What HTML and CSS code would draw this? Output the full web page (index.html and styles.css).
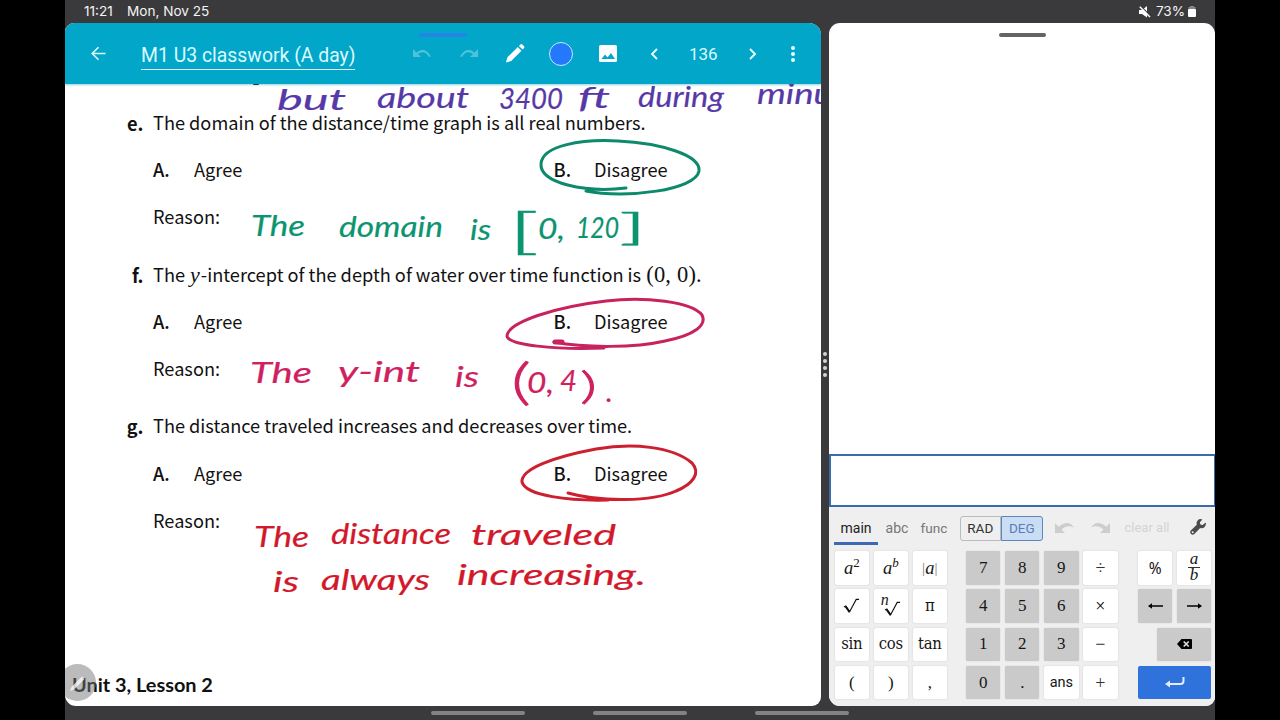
FILE: index.html
```
<!DOCTYPE html>
<html lang="en">
<head>
<meta charset="utf-8">
<title>M1 U3 classwork (A day)</title>
<link rel="stylesheet" href="styles.css">
</head>
<body>
<div class="device">
  <header class="status">
    <span class="clock">11:21</span><span class="date">Mon, Nov 25</span>
    <span class="status-right">
      <svg class="mute" viewBox="0 0 12 12"><path d="M0 4h3l5-4v11.500L3 8H0z" fill="#fff"/><path d="M2 .5 12 10.500" stroke="#3a3a3c" stroke-width="1.300"/><path d="M.8 .8 11 11" stroke="#fff" stroke-width="1.500"/></svg>
      <span class="battery-text">73%</span>
      <svg class="battery" viewBox="0 0 8 11"><path d="M2 0h4v1h1.500v3H.5V1H2z" fill="#858587"/><rect y="3" width="8" height="8" rx="1" fill="#fff"/></svg>
    </span>
  </header>

  <div class="panes">
    <section class="notes">
      <div class="toolbar">
        <svg class="back" viewBox="0 0 16 16"><path d="M15.500 8H1.500M8 1.300 1.300 8 8 14.700" fill="none" stroke="#dffaff" stroke-width="1.700"/></svg>
        <span class="title">M1 U3 classwork (A day)</span>
        <svg class="undo" viewBox="0 0 20 10"><path d="M0 0v9h9L5.500 5.600Q13 .5 17.800 9l2-.7Q13.500-4 3.700 3.800z" fill="#4fc2da"/></svg>
        <svg class="redo" viewBox="0 0 20 10"><path d="M20 0v9h-9l3.500-3.400Q7 .5 2.200 9l-2-.7Q6.500-4 16.300 3.800z" fill="#4fc2da"/></svg>
        <svg class="pencil" viewBox="0 0 20 20"><path d="M.5 19.500 2 14 13 3.200l3.800 3.800L6 18zM14.200 2l1.500-1.500q1-.8 2 0l1.800 1.800q.8 1 0 2L18 5.800z" fill="#fff"/></svg>
        <span class="swatch"></span>
        <svg class="image" viewBox="0 0 18 17"><rect width="18" height="17" rx="1.500" fill="#fff"/><path d="M2.500 14 6 9.500l2.500 3L12 8l4 6z" fill="#02a6c9"/></svg>
        <svg class="prev" viewBox="0 0 8 12"><path d="M7 1 2 6l5 5" fill="none" stroke="#e8fcff" stroke-width="1.900"/></svg>
        <span class="page-no">136</span>
        <svg class="next" viewBox="0 0 8 12"><path d="M1 1l5 5-5 5" fill="none" stroke="#e8fcff" stroke-width="1.900"/></svg>
        <span class="more"><i></i><i></i><i></i></span>
        <span class="tab-mark"></span>
      </div>

      <div class="paper">
        <div class="question">
          <div class="row"><b class="letter">e.</b><span class="stem">The domain of the distance/time graph is all real numbers.</span></div>
          <div class="row options"><b>A.</b><span>Agree</span><b>B.</b><span>Disagree</span></div>
          <div class="row reason">Reason:</div>
        </div>
        <div class="question">
          <div class="row"><b class="letter">f.</b><span class="stem">The <em>y</em>-intercept of the depth of water over time function is <span class="math">(0, 0).</span></span></div>
          <div class="row options"><b>A.</b><span>Agree</span><b>B.</b><span>Disagree</span></div>
          <div class="row reason">Reason:</div>
        </div>
        <div class="question">
          <div class="row"><b class="letter">g.</b><span class="stem">The distance traveled increases and decreases over time.</span></div>
          <div class="row options"><b>A.</b><span>Agree</span><b>B.</b><span>Disagree</span></div>
          <div class="row reason">Reason:</div>
        </div>
        <div class="footer">Unit 3, Lesson 2</div>

        <svg class="ink" viewBox="65 84 756 622">
          <g class="purple">
            <path d="M254 84h4"/>
            <text x="277" y="110" textLength="69" lengthAdjust="spacingAndGlyphs">but</text>
            <text x="377" y="108" textLength="92" lengthAdjust="spacingAndGlyphs">about</text>
            <text x="499" y="109" textLength="64" lengthAdjust="spacingAndGlyphs">3400</text>
            <text x="578" y="108" textLength="32" lengthAdjust="spacingAndGlyphs">ft</text>
            <text x="638" y="107" textLength="86" lengthAdjust="spacingAndGlyphs">during</text>
            <text x="757" y="104" textLength="76" lengthAdjust="spacingAndGlyphs">minu</text>
          </g>
          <g class="green">
            <path d="M626 188C585 193 540 183 541 164C542 145 583 139 618 141C660 143 701 155 699 171C696 190 626 199 586 191"/>
            <text x="251" y="236" textLength="54" lengthAdjust="spacingAndGlyphs">The</text>
            <text x="339" y="237" textLength="104" lengthAdjust="spacingAndGlyphs">domain</text>
            <text x="470" y="240" textLength="21" lengthAdjust="spacingAndGlyphs">is</text>
            <text class="tall" x="508" y="248" textLength="31" lengthAdjust="spacingAndGlyphs">[</text>
            <text x="538" y="239" textLength="27" lengthAdjust="spacingAndGlyphs">0,</text>
            <text x="576" y="238" textLength="43" lengthAdjust="spacingAndGlyphs">120</text>
            <text class="mid" x="619" y="240" textLength="28" lengthAdjust="spacingAndGlyphs">]</text>
          </g>
          <g class="pink">
            <path d="M554 342C585 348 635 348 665 341C695 335 707 325 702 315C692 302 645 296 606 301C555 307 508 322 507 336C508 345 555 350 604 348"/>
            <path class="thick" d="M555 342h7"/>
            <text x="250" y="383" textLength="62" lengthAdjust="spacingAndGlyphs">The</text>
            <text x="338" y="382" textLength="82" lengthAdjust="spacingAndGlyphs">y-int</text>
            <text x="455" y="387" textLength="24" lengthAdjust="spacingAndGlyphs">is</text>
            <text class="tall" x="511" y="399" textLength="20" lengthAdjust="spacingAndGlyphs">(</text>
            <text x="527" y="393" textLength="27" lengthAdjust="spacingAndGlyphs">0,</text>
            <text x="560" y="391" textLength="17" lengthAdjust="spacingAndGlyphs">4</text>
            <text class="mid" x="580" y="399" textLength="17" lengthAdjust="spacingAndGlyphs">)</text>
            <text x="606" y="402">.</text>
          </g>
          <g class="red">
            <path d="M568 493C600 502 652 502 676 491C693 484 701 473 692 463C672 446 632 443 596 449C553 457 521 469 522 482C526 496 570 501 608 500"/>
            <text x="254" y="547" textLength="55" lengthAdjust="spacingAndGlyphs">The</text>
            <text x="331" y="544" textLength="120" lengthAdjust="spacingAndGlyphs">distance</text>
            <text x="471" y="545" textLength="145" lengthAdjust="spacingAndGlyphs">traveled</text>
            <text x="273" y="592" textLength="26" lengthAdjust="spacingAndGlyphs">is</text>
            <text x="321" y="590" textLength="109" lengthAdjust="spacingAndGlyphs">always</text>
            <text x="457" y="585" textLength="189" lengthAdjust="spacingAndGlyphs">increasing.</text>
          </g>
        </svg>
        <span class="bubble"><svg viewBox="0 0 18 18"><path d="M1 17l1.500-4L13 2.500 15.500 5 5 15.500z" fill="#fff" opacity=".75"/></svg></span>
      </div>
    </section>

    <div class="divider"><i></i><i></i><i></i><i></i></div>

    <section class="calc">
      <div class="history"><span class="handle"></span></div>
      <div class="entry"></div>
      <div class="keypad">
        <div class="tabs">
          <span class="tab active">main</span><span class="tab">abc</span><span class="tab func">func</span>
          <span class="angle"><span>RAD</span><span class="on">DEG</span></span>
          <svg class="c-undo" viewBox="0 0 20 11"><path d="M0 1v10h10L6.500 7.500Q12 2 19 5.500 13-3 3.700 4.700z" fill="#cdcdcd"/></svg>
          <svg class="c-redo" viewBox="0 0 20 11"><path d="M20 1v10H10l3.500-3.500Q8 2 1 5.500 7-3 16.300 4.700z" fill="#cdcdcd"/></svg>
          <span class="clear">clear all</span>
          <svg class="wrench" viewBox="0 0 16 16"><path d="M15.600 3.600 12.700 6 10.300 5.500 9.900 3.200 12.400.5Q9.500-.6 7.600 1.500 6 3.300 6.800 5.700L.8 11.500Q-.5 13.300 1 15q1.800 1.500 3.400 0L10.200 9q2.500.8 4.400-1Q16.500 6 15.600 3.600zM2.700 12.200a1 1 0 1 1 0 2 1 1 0 0 1 0-2z" fill="#4c4c4f"/></svg>
        </div>
        <div class="keys">
          <div class="group fn">
            <span class="key it"><i>a</i><sup>2</sup></span><span class="key it"><i>a</i><sup><i>b</i></sup></span><span class="key it abs"><u>|</u><i>a</i><u>|</u></span>
            <span class="key"><svg class="root" viewBox="0 0 18 16"><path d="M1 9l2-1 4 6L14 1h3" fill="none" stroke="#111" stroke-width="1.200"/><path d="M2.700 8.500 7 14.500" stroke="#111" stroke-width="2"/></svg></span>
            <span class="key nroot"><i>n</i><svg class="root" viewBox="0 0 18 16"><path d="M1 9l2-1 4 6L14 1h3" fill="none" stroke="#111" stroke-width="1.200"/><path d="M2.700 8.500 7 14.500" stroke="#111" stroke-width="2"/></svg></span>
            <span class="key word">π</span>
            <span class="key word">sin</span><span class="key word">cos</span><span class="key word">tan</span>
            <span class="key">(</span><span class="key">)</span><span class="key">,</span>
          </div>
          <div class="group num">
            <span class="key gray">7</span><span class="key gray">8</span><span class="key gray">9</span><span class="key op">÷</span>
            <span class="key gray">4</span><span class="key gray">5</span><span class="key gray">6</span><span class="key op times">×</span>
            <span class="key gray">1</span><span class="key gray">2</span><span class="key gray">3</span><span class="key op">−</span>
            <span class="key gray">0</span><span class="key gray">.</span><span class="key ans">ans</span><span class="key op">+</span>
          </div>
          <div class="group edit">
            <span class="key pct">%</span><span class="key"><span class="frac"><i>a</i><i>b</i></span></span>
            <span class="key gray"><svg class="arrow" viewBox="0 0 15 6"><path d="M1 3h14" stroke="#000" stroke-width="1.300"/><path d="M0 3 4 .3v5.400z"/></svg></span>
            <span class="key gray"><svg class="arrow" viewBox="0 0 15 6"><path d="M0 3h14" stroke="#000" stroke-width="1.300"/><path d="M15 3 11 .3v5.400z"/></svg></span>
            <span class="key gray del"><svg viewBox="0 0 15 10"><path d="M0 5 4.500 0H14q1 0 1 1v8q0 1-1 1H4.500z"/><path d="M6.700 2.500l5 5m0-5-5 5" stroke="#ddd" stroke-width="1.700"/></svg></span>
            <span class="key enter"><svg viewBox="0 0 20 11"><path d="M18.500 0v4q0 3-3 3H3" fill="none" stroke="#e4edff" stroke-width="2"/><path d="M0 7l5-3.500v7z" fill="#e4edff"/></svg></span>
          </div>
        </div>
      </div>
    </section>
  </div>

  <nav class="gestures"><i></i><i></i><i></i></nav>
</div>
</body>
</html>
```
FILE: styles.css
```
* { box-sizing: border-box; }
body { margin: 0; background: #000; height: 720px; overflow: hidden; }
svg { display: block; flex: none; }

.device { width: 1150px; height: 720px; margin-left: 65px; background: #3a3a3c; display: flex; flex-direction: column; }

.status { height: 23px; flex: none; display: flex; align-items: center; padding: 0 19px 0 19px; color: #f4f4f4; font: 13.600px/23px Inter, sans-serif; }
.clock { width: 43px; }
.status-right { margin-left: auto; display: flex; align-items: center; font-size: 13.6px; }
.mute { width: 12px; height: 12px; margin-right: 5px; }
.battery-text { width: 31px; letter-spacing: -.1px; }
.battery { width: 8px; height: 11px; margin-left: 1px; }

.panes { height: 683px; flex: none; display: flex; }

.notes { width: 756px; border-radius: 9px 12px 9px 11px; overflow: hidden; background: #fff; display: flex; flex-direction: column; }
.toolbar { position: relative; height: 61px; flex: none; background: #02a6c9; display: flex; align-items: center; padding-left: 26px; color: #d9faff; font-family: Roboto, sans-serif; box-shadow: 0 1px 2px #8fd3e0; }
.back { width: 15px; height: 15px; }
.title { width: 214px; margin: 2px 0 0 35px; height: 30px; font-size: 19.400px; line-height: 31px; white-space: nowrap; border-bottom: 1px solid #e8fbff; }
.undo { width: 20px; height: 9px; margin-left: 57px; }
.redo { width: 20px; height: 9px; margin-left: 27px; }
.pencil { width: 20px; height: 19px; margin-left: 26px; }
.swatch { width: 24px; height: 24px; margin-left: 24px; border-radius: 50%; background: #2478fb; border: 1.5px solid #c4eef9; }
.image { width: 18px; height: 17px; margin-left: 26px; }
.prev { width: 8px; height: 12px; margin-left: 33px; }
.page-no { width: 30px; margin: 1px 0 0 31px; font-size: 17px; }
.next { width: 8px; height: 12px; margin-left: 30px; }
.more { display: flex; flex-direction: column; gap: 2px; margin-left: 34px; }
.more i { width: 4px; height: 4px; border-radius: 50%; background: #e8fcff; }
.tab-mark { position: absolute; left: 354px; top: 10px; width: 48px; height: 4px; border-radius: 2px; background: #2385e6; }

.paper { position: relative; flex: 1; padding-top: 15px; color: #111; font: 18.200px/47.2px "Noto Sans CJK SC", "Noto Sans", sans-serif; display: flex; flex-direction: column; }
.question { height: 151.7px; flex: none; }
.row { height: 47.2px; display: flex; white-space: nowrap; }
.row > * { flex: none; }
.letter { width: 78.5px; padding-top: 1px; text-align: right; }
.stem { margin-left: 9.5px; }
.stem em, .math { font-family: "Liberation Serif", serif; font-size: 22px; line-height: 20px; }
.stem em { margin: 0 1px; }
.math { font-size: 22.5px; margin-left: 1px; letter-spacing: .2px; }
.options { padding-left: 88px; }
.options b { width: 41px; font-weight: 500; }
.options span { width: 359.5px; }
.options span + b { width: 40.5px; }
.reason { padding-left: 88px; }
.footer { margin: auto 0 0 7px; height: 45px; font: 700 19.900px/46px Lato, sans-serif; }

.ink { position: absolute; left: 0; top: 0; width: 756px; height: 622px; overflow: hidden; }
.ink path { fill: none; stroke-width: 3; stroke-linecap: round; }
.ink .thick { stroke-width: 5; }
.ink text { font: italic 400 29px Lato, sans-serif; stroke-width: .2; }
.ink .tall { font-size: 50px; font-style: normal; font-weight: 300; stroke-width: .7; }
.ink .mid { font-size: 37px; font-style: normal; font-weight: 300; stroke-width: .7; }
.purple text { fill: #5638a6; stroke: #5638a6; }
.purple path { stroke: #333; stroke-width: 2; }
.green text { fill: #0c9470; stroke: #0c9470; }
.green path { stroke: #0c8a6b; }
.pink text { fill: #cf2160; stroke: #cf2160; }
.pink path { stroke: #c7235f; }
.red text { fill: #d2182b; stroke: #d2182b; }
.red path { stroke: #cc1f30; }

.bubble { position: absolute; left: -6px; top: 580px; width: 37px; height: 37px; border-radius: 50%; background: rgba(120, 120, 120, .5); display: flex; align-items: center; justify-content: center; }
.bubble svg { width: 18px; height: 18px; }

.divider { width: 8px; display: flex; flex-direction: column; align-items: center; justify-content: center; gap: 3px; }
.divider i { width: 4px; height: 4px; border-radius: 50%; background: #d5d5d5; }

.calc { width: 386px; border-radius: 11px 11px 9px 11px; overflow: hidden; background: #fff; display: flex; flex-direction: column; }
.history { height: 431px; flex: none; display: flex; justify-content: center; padding-top: 10px; }
.handle { width: 47px; height: 4px; border-radius: 2px; background: #646466; }
.entry { height: 53px; flex: none; border: 2px solid #3a6cab; border-right-width: 1px; }
.keypad { flex: 1; background: #efefef; }
.tabs { height: 44px; display: flex; padding-left: 5px; color: #777; font: 14px/42px Roboto, sans-serif; }
.tabs > * { flex: none; }
.tab { width: 36px; text-align: center; height: 38px; }
.tab.active { width: 44px; color: #222; border-bottom: 3px solid #3c68b5; }
.tab.active + .tab { margin-left: 1px; }
.func { width: 38px; font-size: 13.6px; }
.angle { display: flex; width: 83px; height: 25px; margin: 9px 0 0 6.500px; font-size: 13.5px; line-height: 23px; text-align: center; color: #333; }
.angle span { flex: 1; border: 1px solid #bbb; border-radius: 3px 0 0 3px; }
.angle .on { border-color: #5b87bd; border-radius: 0 3px 3px 0; background: #cbdcf5; color: #557fb9; }
.c-undo { width: 20px; height: 11px; margin: 15px 0 0 12px; }
.c-redo { width: 20px; height: 11px; margin: 15px 0 0 15px; }
.clear { width: 45px; margin-left: 15px; color: #d4d4d4; white-space: nowrap; font-size: 13px; }
.wrench { width: 16px; height: 16px; margin: 12px 0 0 20px; }

.keys { display: flex; gap: 19.5px; padding: 0 0 0 6px; }
.group { display: grid; grid-auto-rows: 33.6px; row-gap: 4.700px; }
.fn { grid-template-columns: repeat(3, 33.500px); column-gap: 5.5px; }
.num { grid-template-columns: repeat(4, 34.400px); column-gap: 4.700px; }
.edit { grid-template-columns: repeat(2, 34.400px); column-gap: 4.600px; margin-left: .8px; }
.key { background: #fff; border-radius: 2px; box-shadow: 0 0 2px #ccc; display: flex; align-items: center; justify-content: center; color: #161616; font: 17px/20px "Liberation Serif", serif; }
.gray { background: #cacaca; box-shadow: 0 0 1px #aaa; }
.word { font: 16.500px/20px "DejaVu Serif Condensed", "DejaVu Serif", serif; letter-spacing: -.3px; }
.it { font-size: 18.5px; }
.it sup { font-size: 13px; line-height: 10px; margin-bottom: 9px; }
.abs u { text-decoration: none; color: #777; font-size: 15px; }
.root { width: 17px; height: 16px; }
.nroot i { font-size: 16px; margin: -12px -5px 0 0; }
.nroot .root { margin-top: 5px; }
.op { font-size: 18px; color: #333; }
.times { color: #000; }
.ans { font: 14.500px/20px Roboto, sans-serif; }
.pct { font-family: "Noto Sans", sans-serif; font-size: 15.5px; }
.frac { display: flex; flex-direction: column; text-align: center; width: 12px; line-height: 14px; margin-top: -2px; }
.frac i:first-child { border-bottom: 1px solid #333; padding-bottom: 1px; }
.arrow { width: 15px; height: 6px; }
.del { grid-column: 1 / 3; margin-left: 19px; }
.del svg { width: 15px; height: 10px; }
.enter { grid-column: 1 / 3; background: #2f72dc; box-shadow: none; }
.enter svg { width: 20px; height: 11px; }

.gestures { display: flex; gap: 68px; padding: 5px 0 0 366px; }
.gestures i { width: 94px; height: 4px; border-radius: 2px; background: #838385; }
```
